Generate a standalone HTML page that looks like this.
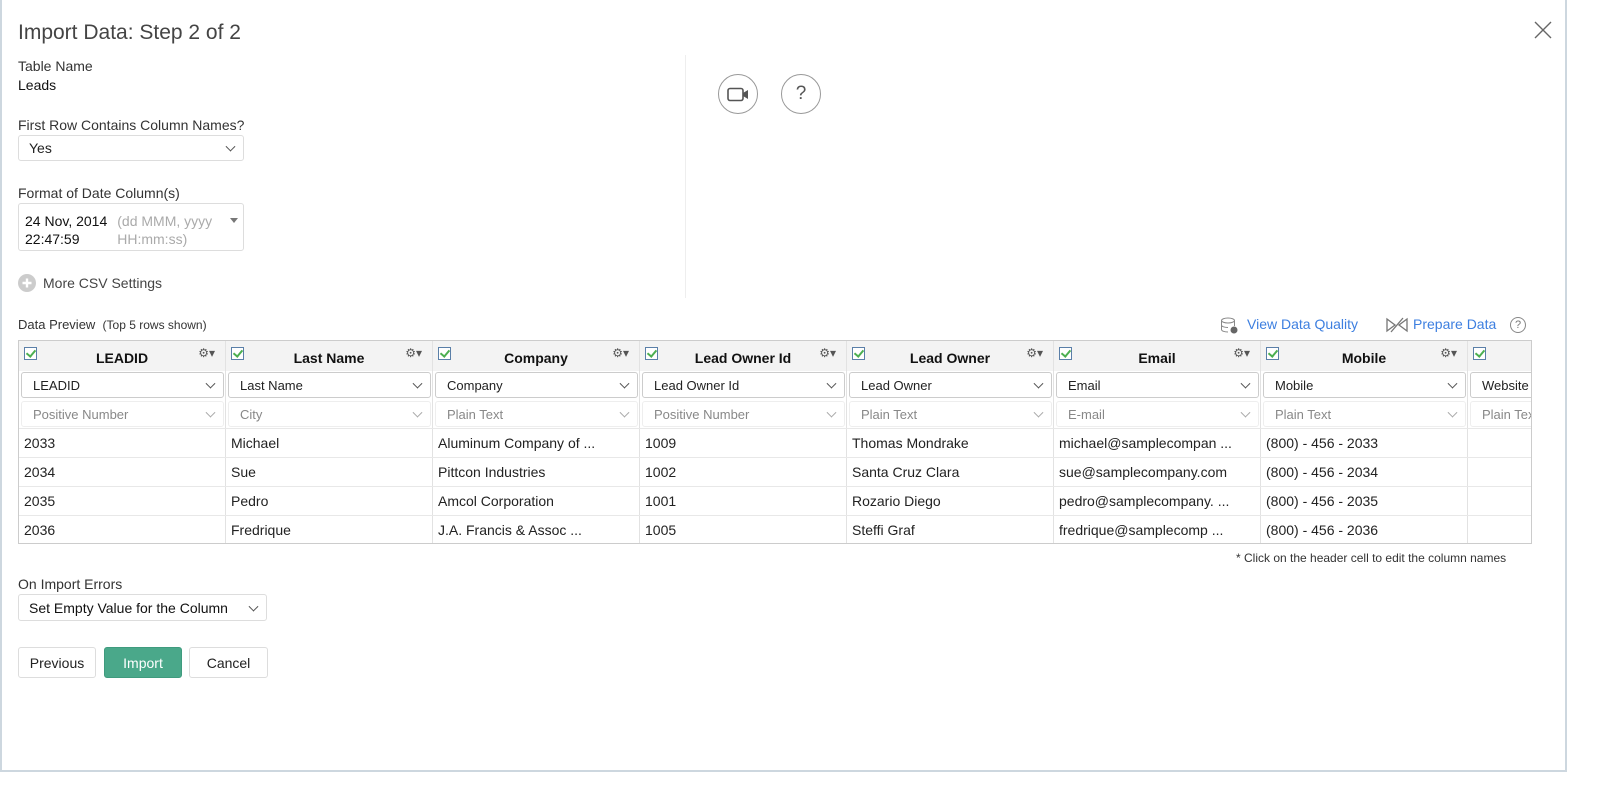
<!DOCTYPE html>
<html><head><meta charset="utf-8"><style>
*{box-sizing:border-box;margin:0;padding:0}
body{width:1600px;height:788px;background:#fff;font-family:"Liberation Sans",sans-serif;color:#222;position:relative;overflow:hidden}
.frame{position:absolute;left:0;top:0;width:1567px;height:772px;border:2px solid #cdd7df;border-top:none}
.a{position:absolute;white-space:nowrap}
.lbl{font-size:14px;color:#333}
.sel{position:absolute;border:1px solid #ddd;border-radius:3px;background:#fff;font-size:14px;padding-left:10px;display:flex;align-items:center}
.chev{position:absolute;right:9px;top:50%;width:7px;height:7px;border-right:1.3px solid #555;border-bottom:1.3px solid #555;transform:translateY(-70%) rotate(45deg)}
.chev.l{border-color:#aaa}
.btn{position:absolute;top:647px;height:31px;border:1px solid #ddd;border-radius:3px;font-size:14px;display:flex;align-items:center;justify-content:center;background:#fff}
.tbl{position:absolute;left:18px;top:340px;width:1514px;height:204px;border:1px solid #ccc;overflow:hidden}
.col{position:absolute;top:0;height:204px;width:207px;border-right:1px solid #e2e2e2}
.hd{height:30px;background:#f3f3f3;position:relative;font-weight:bold;font-size:14px;text-align:center;padding-top:9px;color:#111}
.cb{position:absolute;left:5px;top:6px;width:13px;height:13px;border:1px solid #5a7fa8;background:#fff}
.cb:after{content:"";position:absolute;left:3px;top:0px;width:4px;height:7px;border-right:2px solid #4caf50;border-bottom:2px solid #4caf50;transform:rotate(40deg)}
.gear{position:absolute;right:10px;top:5px;font-size:12px;color:#555;font-weight:normal}
.s1,.s2{position:absolute;left:2px;width:203px;height:26px;border:1px solid #ddd;border-radius:3px;background:#fff;font-size:13px;padding-left:11px;display:flex;align-items:center}
.s1{top:31px;color:#222;border-color:#ccc}
.s2{top:60px;color:#888;border-color:#eee}
.r{position:absolute;left:0;width:207px;height:29px;font-size:14px;padding-left:5px;display:flex;align-items:center;border-top:1px solid #e8e8e8}
.circ{position:absolute;width:40px;height:40px;border:1px solid #999;border-radius:50%}
</style></head><body>
<div class="frame"></div>
<div class="a" style="left:18px;top:21px;font-size:21px;color:#444">Import Data: Step 2 of 2</div>
<svg class="a" style="left:1534px;top:21px" width="18" height="18"><path d="M1 1L17 17M17 1L1 17" stroke="#666" stroke-width="1.4"/></svg>
<div class="a lbl" style="left:18px;top:58px">Table Name</div>
<div class="a" style="left:18px;top:77px;font-size:14px;color:#111">Leads</div>
<div class="a lbl" style="left:18px;top:117px">First Row Contains Column Names?</div>
<div class="sel" style="left:18px;top:135px;width:226px;height:26px">Yes<span class="chev"></span></div>
<div class="a lbl" style="left:18px;top:185px">Format of Date Column(s)</div>
<div class="sel" style="left:18px;top:203px;width:226px;height:48px;align-items:flex-start;padding-top:8px;padding-left:6px;line-height:18px">
<div style="color:#111">24 Nov, 2014<br>22:47:59</div><div style="color:#aaa;margin-left:10px">(dd MMM, yyyy<br>HH:mm:ss)</div>
<span style="position:absolute;right:5px;top:14px;border:4.5px solid transparent;border-top:5px solid #777"></span></div>
<svg class="a" style="left:18px;top:274px" width="18" height="18"><circle cx="9" cy="9" r="9" fill="#ccc"/><path d="M9 4.5V13.5M4.5 9H13.5" stroke="#fff" stroke-width="2.4"/></svg>
<div class="a" style="left:43px;top:275px;font-size:14px;color:#444">More CSV Settings</div>
<div class="a" style="left:685px;top:55px;width:1px;height:243px;background:#eee"></div>
<div class="circ" style="left:718px;top:74px"><svg style="position:absolute;left:8px;top:12px" width="24" height="16"><rect x="1" y="1.5" width="15" height="12" rx="2" fill="none" stroke="#555" stroke-width="1.6"/><path d="M16 6L21 3V12L16 9Z" fill="#555"/></svg></div>
<div class="circ" style="left:781px;top:74px;text-align:center;font-size:19px;line-height:38px;color:#555">?</div>
<div class="a" style="left:18px;top:317px;font-size:13px;color:#333">Data Preview&nbsp;&nbsp;<span style="font-size:12px">(Top 5 rows shown)</span></div>
<svg class="a" style="left:1220px;top:317px" width="20" height="17"><ellipse cx="8" cy="3.5" rx="6.5" ry="2.5" fill="none" stroke="#888"/><path d="M1.5 3.5V12.5C1.5 14 4.5 15 8 15M14.5 3.5V9M1.5 8C1.5 9.5 4.5 10.5 8 10.5" fill="none" stroke="#888"/><circle cx="14" cy="13" r="3.5" fill="#666"/></svg>
<div class="a" style="left:1247px;top:316px;font-size:14px;color:#3d7fe0">View Data Quality</div>
<svg class="a" style="left:1386px;top:317px" width="22" height="16"><path d="M1 2L9 8L1 14ZM21 2L13 8L21 14ZM5 15L17 1" fill="none" stroke="#777" stroke-width="1.3"/></svg>
<div class="a" style="left:1413px;top:316px;font-size:14px;color:#3d7fe0">Prepare Data</div>
<div class="a" style="left:1510px;top:317px;width:16px;height:16px;border:1px solid #888;border-radius:50%;font-size:11px;text-align:center;line-height:14px;color:#777">?</div>
<div class="tbl">
<div class="col" style="left:0"><div class="hd"><span class="cb"></span>LEADID<span class="gear">⚙▾</span></div><div class="s1">LEADID<span class="chev"></span></div><div class="s2">Positive Number<span class="chev l"></span></div><div class="r" style="top:87px">2033</div><div class="r" style="top:116px">2034</div><div class="r" style="top:145px">2035</div><div class="r" style="top:174px">2036</div></div>
<div class="col" style="left:207px"><div class="hd"><span class="cb"></span>Last Name<span class="gear">⚙▾</span></div><div class="s1">Last Name<span class="chev"></span></div><div class="s2">City<span class="chev l"></span></div><div class="r" style="top:87px">Michael</div><div class="r" style="top:116px">Sue</div><div class="r" style="top:145px">Pedro</div><div class="r" style="top:174px">Fredrique</div></div>
<div class="col" style="left:414px"><div class="hd"><span class="cb"></span>Company<span class="gear">⚙▾</span></div><div class="s1">Company<span class="chev"></span></div><div class="s2">Plain Text<span class="chev l"></span></div><div class="r" style="top:87px">Aluminum Company of ...</div><div class="r" style="top:116px">Pittcon Industries</div><div class="r" style="top:145px">Amcol Corporation</div><div class="r" style="top:174px">J.A. Francis &amp; Assoc ...</div></div>
<div class="col" style="left:621px"><div class="hd"><span class="cb"></span>Lead Owner Id<span class="gear">⚙▾</span></div><div class="s1">Lead Owner Id<span class="chev"></span></div><div class="s2">Positive Number<span class="chev l"></span></div><div class="r" style="top:87px">1009</div><div class="r" style="top:116px">1002</div><div class="r" style="top:145px">1001</div><div class="r" style="top:174px">1005</div></div>
<div class="col" style="left:828px"><div class="hd"><span class="cb"></span>Lead Owner<span class="gear">⚙▾</span></div><div class="s1">Lead Owner<span class="chev"></span></div><div class="s2">Plain Text<span class="chev l"></span></div><div class="r" style="top:87px">Thomas Mondrake</div><div class="r" style="top:116px">Santa Cruz Clara</div><div class="r" style="top:145px">Rozario Diego</div><div class="r" style="top:174px">Steffi Graf</div></div>
<div class="col" style="left:1035px"><div class="hd"><span class="cb"></span>Email<span class="gear">⚙▾</span></div><div class="s1">Email<span class="chev"></span></div><div class="s2">E-mail<span class="chev l"></span></div><div class="r" style="top:87px">michael@samplecompan ...</div><div class="r" style="top:116px">sue@samplecompany.com</div><div class="r" style="top:145px">pedro@samplecompany. ...</div><div class="r" style="top:174px">fredrique@samplecomp ...</div></div>
<div class="col" style="left:1242px"><div class="hd"><span class="cb"></span>Mobile<span class="gear">⚙▾</span></div><div class="s1">Mobile<span class="chev"></span></div><div class="s2">Plain Text<span class="chev l"></span></div><div class="r" style="top:87px">(800) - 456 - 2033</div><div class="r" style="top:116px">(800) - 456 - 2034</div><div class="r" style="top:145px">(800) - 456 - 2035</div><div class="r" style="top:174px">(800) - 456 - 2036</div></div>
<div class="col" style="left:1449px"><div class="hd"><span class="cb"></span></div><div class="s1">Website<span class="chev"></span></div><div class="s2">Plain Text<span class="chev l"></span></div><div class="r" style="top:87px"></div><div class="r" style="top:116px"></div><div class="r" style="top:145px"></div><div class="r" style="top:174px"></div></div>
</div>
<div class="a" style="left:1236px;top:551px;font-size:12px;color:#333">* Click on the header cell to edit the column names</div>
<div class="a lbl" style="left:18px;top:576px">On Import Errors</div>
<div class="sel" style="left:18px;top:594px;width:249px;height:27px;color:#111">Set Empty Value for the Column<span class="chev"></span></div>
<div class="btn" style="left:18px;width:78px;color:#222">Previous</div>
<div class="btn" style="left:104px;width:78px;background:#4aa88a;border-color:#3f9b7e;color:#fff">Import</div>
<div class="btn" style="left:189px;width:79px;color:#222">Cancel</div>
</body></html>
